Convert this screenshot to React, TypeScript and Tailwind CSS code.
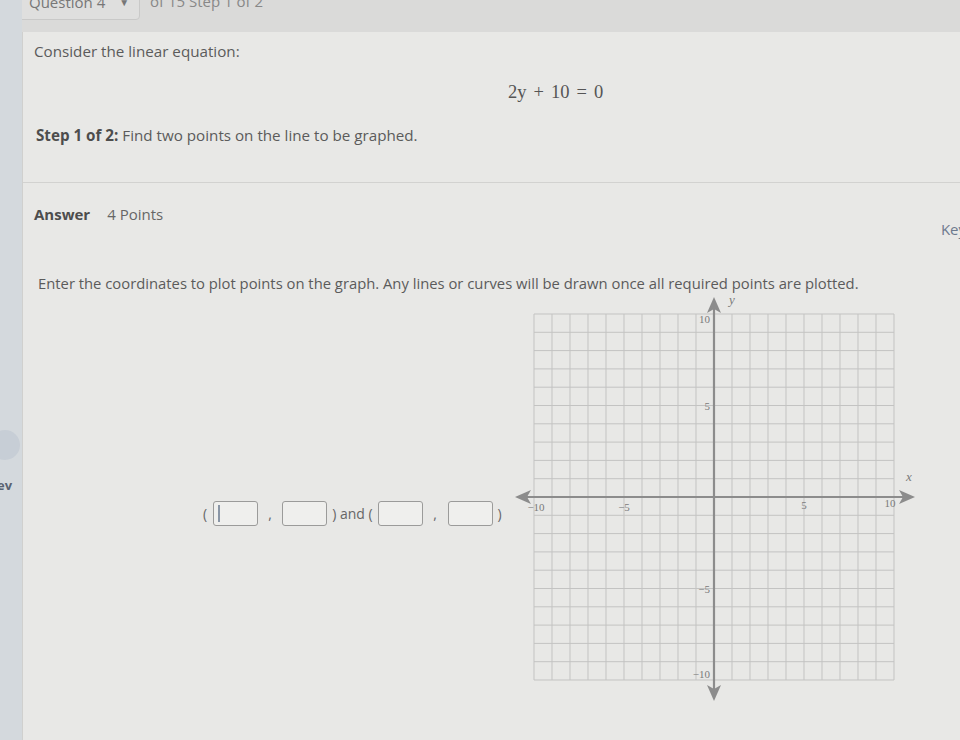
import React from "react";

const CW = 18;
const CH = 18.3;
const GX = 23;
const GY = 23;

function Graph() {
  const lines = [];
  for (let i = 0; i <= 20; i++) {
    const x = GX + i * CW;
    const y = GY + i * CH;
    lines.push(<line key={"v" + i} x1={x} y1={GY} x2={x} y2={GY + 20 * CH} stroke="#c3c3c2" strokeWidth={1} />);
    lines.push(<line key={"h" + i} x1={GX} y1={y} x2={GX + 20 * CW} y2={y} stroke="#c3c3c2" strokeWidth={1} />);
  }
  const ox = GX + 10 * CW;
  const oy = GY + 10 * CH;
  const lbl = "#7a7a7a";
  return (
    <svg width={420} height={420} viewBox="0 0 420 420" className="shrink-0">
      {lines}
      {/* axes */}
      <line x1={14} y1={oy} x2={396} y2={oy} stroke="#8c8c8c" strokeWidth={2.2} />
      <line x1={ox} y1={16} x2={ox} y2={398} stroke="#8c8c8c" strokeWidth={2.2} />
      <polygon points={`4,${oy} 20,${oy - 7} 16,${oy} 20,${oy + 7}`} fill="#8c8c8c" />
      <polygon points={`404,${oy} 388,${oy - 7} 392,${oy} 388,${oy + 7}`} fill="#8c8c8c" />
      <polygon points={`${ox},6 ${ox - 7},22 ${ox},18 ${ox + 7},22`} fill="#8c8c8c" />
      <polygon points={`${ox},410 ${ox - 7},394 ${ox},398 ${ox + 7},394`} fill="#8c8c8c" />
      <g fontFamily="'Liberation Serif', serif" fontSize={11} fill={lbl}>
        <text x={ox - 4} y={GY + 9} textAnchor="end">10</text>
        <text x={ox - 4} y={GY + 5 * CH + 4} textAnchor="end">5</text>
        <text x={ox - 4} y={GY + 15 * CH + 4} textAnchor="end">−5</text>
        <text x={ox - 4} y={GY + 20 * CH - 2} textAnchor="end">−10</text>
        <text x={GX + 2} y={oy + 14} textAnchor="middle">−10</text>
        <text x={GX + 5 * CW} y={oy + 14} textAnchor="middle">−5</text>
        <text x={GX + 15 * CW} y={oy + 12} textAnchor="middle">5</text>
        <text x={GX + 20 * CW - 4} y={oy + 10} textAnchor="middle">10</text>
        <text x={ox + 15} y={13} fontStyle="italic" fontSize={13}>y</text>
        <text x={395} y={oy - 16} fontStyle="italic" fontSize={13}>x</text>
      </g>
    </svg>
  );
}

function Box({ focused }: { focused?: boolean }) {
  return (
    <div className="w-[45px] h-[25px] rounded-[3px] border border-[#9b9b9a] bg-[#efefed] flex items-center pl-[4px]">
      {focused && <div className="w-[2px] h-[17px] bg-[#8a96a6]" />}
    </div>
  );
}

export default function App() {
  return (
    <div className="w-[960px] h-[740px] overflow-hidden flex bg-[#d6d9db] font-['Open_Sans',sans-serif] text-[#5b5b5b]">
      {/* left rail */}
      <aside className="w-[22px] shrink-0 bg-[#d4d9dd] flex flex-col pt-[430px] overflow-hidden">
        <div className="w-[30px] h-[30px] -ml-[10px] rounded-full bg-[#c7ced6]" />
        <div className="-ml-[17px] mt-[17px] text-[13px] leading-[16px] font-bold text-[#596371]">Prev</div>
      </aside>

      <div className="flex-1 flex flex-col min-w-0">
        {/* top bar */}
        <header className="h-[32px] shrink-0 bg-[#dadad9] flex items-start overflow-hidden">
          <div className="-ml-[6px] -mt-[14px] h-[34px] w-[124px] border border-[#c9c9c8] rounded-b-[4px] bg-[#dfdfde] pl-[12px] pt-[5px] flex items-start gap-[14px] text-[15px] leading-[20px] text-[#777]">
            <span>Question 4</span>
            <span className="text-[10px] leading-[20px]">▼</span>
          </div>
          <div className="-mt-[9px] ml-[10px] text-[15px] leading-[20px] text-[#888]">of 15 Step 1 of 2</div>
        </header>

        {/* card */}
        <main className="flex-1 bg-[#e8e8e6] border-l border-[#d0d0ce] flex flex-col">
          <div className="pl-[11px] pt-[9px] text-[15.2px] leading-[20px]">Consider the linear equation:</div>
          <div className="pl-[485px] pt-[20px] flex items-center gap-[7px] text-[18.5px] leading-[22px] font-['Liberation_Serif',serif] text-[#555]">
            <span>2y</span>
            <span>+</span>
            <span>10</span>
            <span>=</span>
            <span>0</span>
          </div>
          <div className="pl-[13px] pt-[22px] text-[15.2px] leading-[20px]">
            <span className="font-bold text-[#4d4d4d]">Step 1 of 2:</span> Find two points on the line to be graphed.
          </div>
          <div className="mt-[37px] border-t border-[#d2d2d0]" />

          <div className="flex items-start pl-[11px] pt-[21px] text-[15px] leading-[20px]">
            <span className="font-bold text-[#4d4d4d]">Answer</span>
            <span className="ml-[17px] text-[#666]">4 Points</span>
            <span className="ml-auto mt-[15px] -mr-[6px] text-[#6d7a8e]">Key</span>
          </div>

          <div className="pl-[15px] pt-[34px] text-[14.8px] leading-[20px]">
            Enter the coordinates to plot points on the graph. Any lines or curves will be drawn once all required points are plotted.
          </div>

          <div className="flex items-center pl-[180px] -mt-[2px]">
            <div className="w-[308px] flex items-center mt-[24px] text-[14px] text-[#666]">
              <span>(</span>
              <span className="ml-[6px]"><Box focused /></span>
              <span className="w-[24px] text-center">,</span>
              <Box />
              <span className="mx-[5px]">) and (</span>
              <Box />
              <span className="w-[25px] text-center">,</span>
              <Box />
              <span className="ml-[5px]">)</span>
            </div>
            <Graph />
          </div>
        </main>
      </div>
    </div>
  );
}
